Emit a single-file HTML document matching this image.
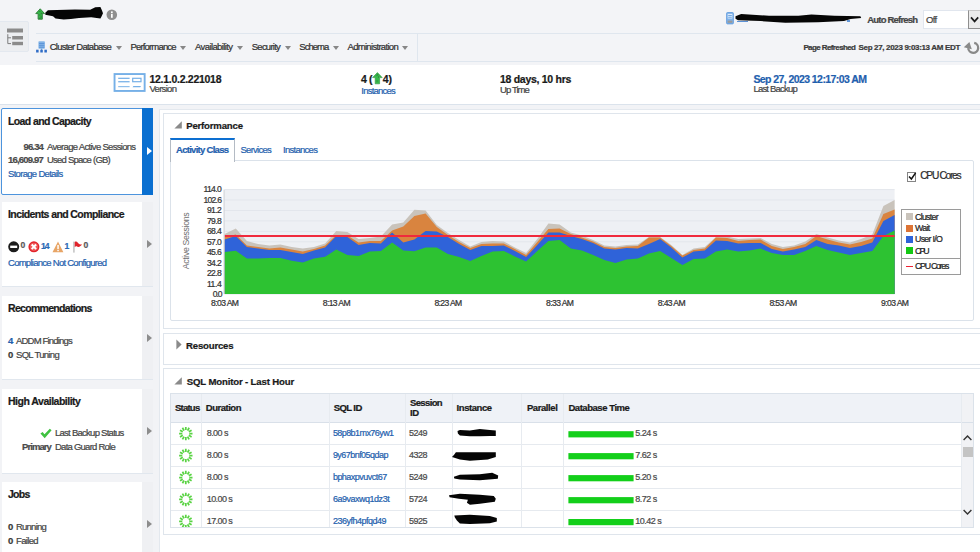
<!DOCTYPE html>
<html>
<head>
<meta charset="utf-8">
<title>Cluster Database</title>
<style>
html,body{margin:0;padding:0;}
body{width:980px;height:552px;overflow:hidden;position:relative;background:#f2f3f6;font-family:"Liberation Sans",sans-serif;}
.a{position:absolute;}
.t{position:absolute;white-space:nowrap;line-height:12px;font-family:"Liberation Sans",sans-serif;-webkit-text-stroke:0.22px;}
.card{position:absolute;left:2px;width:140px;background:#fff;border-bottom:1px solid #e1e7ee;box-sizing:border-box;}
.strip{position:absolute;left:142px;width:11px;background:#eff0f3;border-bottom:1px solid #e1e7ee;box-sizing:border-box;}
.arr{position:absolute;width:0;height:0;border-left:5.2px solid #8d8d8d;border-top:4.5px solid transparent;border-bottom:4.5px solid transparent;}
.dd{position:absolute;width:0;height:0;border-top:4.6px solid #878787;border-left:3px solid transparent;border-right:3px solid transparent;}
.panel{position:absolute;background:#fff;border:1px solid #dfe5ec;box-sizing:border-box;}
.hl{position:absolute;height:1px;background:#dfe6ee;}
.vl{position:absolute;width:1px;background:#dfe6ee;}
</style>
</head>
<body>
<!-- ===== header ===== -->
<div class="a" style="left:0;top:0;width:980px;height:65px;background:#f3f4f7;"></div>
<div class="hl" style="left:36px;top:33px;width:944px;"></div>
<div class="hl" style="left:36px;top:61px;width:944px;"></div>
<div class="vl" style="left:417px;top:34px;height:27px;"></div>
<!-- hamburger/tree button -->
<div class="a" style="left:-1px;top:21.4px;width:29.6px;height:30.4px;background:#eceef1;border:1px solid #e3e8ef;box-sizing:border-box;border-radius:0 2px 2px 0;"></div>
<svg class="a" style="left:0;top:22px;" width="29" height="30" viewBox="0 0 29 30">
  <rect x="7" y="6.5" width="16" height="4" fill="#8b8b8b"/>
  <rect x="12.2" y="14" width="10.8" height="3.5" fill="#8b8b8b"/>
  <rect x="12.2" y="19.8" width="10.8" height="3.4" fill="#8b8b8b"/>
  <path d="M7.8 12.2 V21.6 H11 M7.8 15.8 H11" stroke="#7d7d7d" stroke-width="1" fill="none"/>
</svg>
<!-- green up arrow -->
<svg class="a" style="left:35px;top:8px;" width="11" height="12" viewBox="0 0 11 12">
  <path d="M5.2 0.8 L9.6 5.6 H7.3 V11.2 H3.1 V5.6 H0.8 Z" fill="#34b848" stroke="#2f7a38" stroke-width="0.9"/>
  <path d="M4.4 3.2 h0.9 v0.9 h-0.9z M5.8 4.8 h0.9 v0.9 h-0.9z M4.4 6.6 h0.9 v0.9 h-0.9z M5.6 8.6 h0.9 v0.9 h-0.9z M4.4 9.8 h0.9 v0.9 h-0.9z" fill="#2b5a33"/>
</svg>
<!-- redacted target name -->
<svg class="a" style="left:0;top:0;" width="120" height="24" viewBox="0 0 120 24">
  <path d="M45.3 12.8 L47.9 10.2 L74.9 9.4 L90.2 9.7 L95.3 7.3 L100.4 6.9 L101.9 10.2 L103 13.3 L101.4 16.8 L100.4 18.4 L91.2 17.3 L79 17.9 L70.8 18.9 L63.7 19.4 L55.5 18.4 L53 16.3 L45.3 14.8 Z" fill="#050505"/>
</svg>
<!-- info icon -->
<svg class="a" style="left:106px;top:9px;" width="12" height="12" viewBox="0 0 12 12">
  <circle cx="5.8" cy="5.7" r="5.3" fill="#8f8f8f"/>
  <rect x="5" y="4.8" width="1.7" height="4" fill="#fff"/>
  <rect x="5" y="2.4" width="1.7" height="1.6" fill="#fff"/>
</svg>
<!-- cluster database icon -->
<svg class="a" style="left:36px;top:40.6px;" width="12" height="12" viewBox="0 0 12 12">
  <rect x="2.4" y="0.3" width="6.5" height="7.5" rx="0.8" fill="#86b6e8"/>
  <rect x="3" y="1.9" width="5.3" height="1" fill="#5b93d6"/>
  <rect x="3" y="3.8" width="5.3" height="1" fill="#5b93d6"/>
  <rect x="3" y="5.7" width="5.3" height="1" fill="#5b93d6"/>
  <rect x="5.2" y="7.6" width="0.9" height="1.6" fill="#5b93d6"/>
  <rect x="0.1" y="8.7" width="2.5" height="2.8" fill="#2f6cc6"/>
  <rect x="4.3" y="8.7" width="2.5" height="2.8" fill="#2f6cc6"/>
  <rect x="8.4" y="8.7" width="2.5" height="2.8" fill="#2f6cc6"/>
</svg>
<!-- dropdown arrows -->
<div class="dd" style="left:115.9px;top:45.8px;"></div>
<div class="dd" style="left:180.1px;top:45.8px;"></div>
<div class="dd" style="left:236.6px;top:45.8px;"></div>
<div class="dd" style="left:284.6px;top:45.8px;"></div>
<div class="dd" style="left:332.6px;top:45.8px;"></div>
<div class="dd" style="left:402.1px;top:45.8px;"></div>
<!-- phone/host icon -->
<svg class="a" style="left:726px;top:12.4px;" width="9" height="13" viewBox="0 0 9 13">
  <rect x="0.6" y="0.5" width="6.8" height="11.4" rx="0.9" fill="#7fb3ea" stroke="#5a97dc" stroke-width="0.8"/>
  <rect x="1.7" y="1.9" width="4.6" height="4.6" fill="#dcebfb"/>
  <rect x="2.2" y="3" width="3.6" height="0.8" fill="#5a97dc"/>
  <rect x="2.2" y="4.8" width="3.6" height="0.8" fill="#5a97dc"/>
  <rect x="1.6" y="8.6" width="4.8" height="2.2" fill="#9a9a9a"/>
</svg>
<!-- link text peeking from under redaction -->
<div class="a" style="left:737px;top:20.6px;width:11px;height:1.8px;background:#3f7fd0;opacity:.85;"></div>
<div class="a" style="left:847px;top:20px;width:3.4px;height:1.6px;background:#3f7fd0;opacity:.8;"></div>
<!-- redacted host -->
<svg class="a" style="left:700px;top:0;" width="180" height="30" viewBox="700 0 180 30">
  <path d="M735.5 16.2 L741.2 14.1 L769 15.8 L798.4 15.8 L811.4 14.6 L834.3 15.8 L860.4 16.2 L861.2 17.9 L850.6 19 L844 21.1 L818 22.3 L785.3 22.8 L760.8 21.1 L738 20.3 L735.5 18.7 Z" fill="#050505"/>
</svg>
<!-- select box -->
<div class="a" style="left:923px;top:10px;width:60px;height:19px;background:#fff;border:1px solid #e1e6ee;box-sizing:border-box;"></div>
<div class="a" style="left:968px;top:10px;width:14px;height:19px;background:#ebebeb;border-left:1px solid #8f8f8f;border-bottom:1px solid #8f8f8f;border-top:1px solid #c8c8c8;box-sizing:border-box;"></div>
<svg class="a" style="left:970px;top:16px;" width="10" height="8" viewBox="0 0 10 8"><path d="M1 1.4 L4.6 5.4 L8.2 1.4" stroke="#1c1c1c" stroke-width="1.7" fill="none"/></svg>
<!-- refresh icon -->
<svg class="a" style="left:960px;top:38px;" width="20" height="20" viewBox="0 0 20 20">
  <path d="M14.2 4.9 A5 5 0 1 1 8.2 10.2" stroke="#898989" stroke-width="2.3" fill="none"/>
  <path d="M3.8 9.2 L9.4 4.0 L11.8 11.2 Z" fill="#898989"/>
</svg>

<!-- ===== summary bar ===== -->
<div class="a" style="left:0;top:65px;width:980px;height:39px;background:#fff;"></div>
<div class="hl" style="left:0;top:104px;width:980px;background:#dbe3ec;"></div>
<!-- version card icon -->
<svg class="a" style="left:113px;top:73px;" width="34" height="20" viewBox="0 0 34 20">
  <rect x="1.55" y="1.05" width="30.1" height="16.9" fill="#fff" stroke="#76b0e7" stroke-width="1.9"/>
  <rect x="5.2" y="4.7" width="11.4" height="1.25" fill="#76b0e7"/>
  <rect x="5.2" y="8.1" width="11.4" height="1.25" fill="#76b0e7"/>
  <rect x="5.2" y="13" width="11.4" height="1.2" fill="#8fbfec"/>
  <path d="M19.6 14.2 L20.4 12.9 H28 L27.2 14.2 Z" fill="#76b0e7"/>
  <rect x="19.7" y="5.3" width="8.3" height="3.4" fill="#fff" stroke="#76b0e7" stroke-width="1.2"/>
</svg>
<!-- instances green arrow -->
<svg class="a" style="left:372px;top:72.4px;" width="11" height="13" viewBox="0 0 11 13">
  <path d="M5.4 0.6 L10.2 5.6 H7.6 V11.8 H3.2 V5.6 H0.6 Z" fill="#36ba4a" stroke="#3f9a4c" stroke-width="0.7"/>
  <path d="M4.6 3.2 h0.9 v0.9 h-0.9z M6 4.6 h0.9 v0.9 h-0.9z M4.6 8.6 h0.9 v0.9 h-0.9z M5.4 1.9 h0.8 v0.8 h-0.8z" fill="#35603c"/>
</svg>

<!-- ===== left column ===== -->
<!-- card 1 (selected) -->
<div class="a" style="left:1px;top:108px;width:152px;height:87px;background:#fff;border:1px solid #4d94dd;box-sizing:border-box;border-radius:2px;"></div>
<div class="a" style="left:142px;top:108px;width:11px;height:87px;background:#0a6fd0;"></div>
<div class="a" style="left:147px;top:147px;width:0;height:0;border-left:5px solid #fff;border-top:4px solid transparent;border-bottom:4px solid transparent;"></div>
<!-- card 2 -->
<div class="card" style="top:202px;height:85px;"></div><div class="strip" style="top:202px;height:85px;"></div>
<div class="arr" style="left:147px;top:239.9px;"></div>
<!-- card 3 -->
<div class="card" style="top:296px;height:84px;"></div><div class="strip" style="top:296px;height:84px;"></div>
<div class="arr" style="left:147px;top:333.5px;"></div>
<!-- card 4 -->
<div class="card" style="top:389px;height:85px;"></div><div class="strip" style="top:389px;height:85px;"></div>
<div class="arr" style="left:147px;top:426.9px;"></div>
<!-- card 5 -->
<div class="card" style="top:482px;height:75px;"></div><div class="strip" style="top:482px;height:75px;"></div>
<div class="arr" style="left:147px;top:520.1px;"></div>

<!-- incident icons -->
<svg class="a" style="left:8px;top:240.5px;" width="12" height="12" viewBox="0 0 12 12">
  <circle cx="5.7" cy="5.8" r="5.5" fill="#1c1c1c"/><rect x="2.2" y="4.6" width="7" height="2.4" fill="#fff"/>
</svg>
<svg class="a" style="left:27.5px;top:240.5px;" width="12" height="12" viewBox="0 0 12 12">
  <circle cx="5.9" cy="5.8" r="5.5" fill="#e2242c"/><circle cx="5.9" cy="5.8" r="4.1" fill="#ee5a5a"/>
  <path d="M3.7 3.5 L8.1 8.1 M8.1 3.5 L3.7 8.1" stroke="#fff" stroke-width="2"/>
</svg>
<svg class="a" style="left:51.5px;top:240.5px;" width="13" height="12" viewBox="0 0 13 12">
  <path d="M6 0.6 L11.4 11.3 H0.5 Z" fill="#e8a566"/>
  <rect x="5.3" y="4" width="1.5" height="4" fill="#fff"/><rect x="5.3" y="8.8" width="1.5" height="1.4" fill="#fff"/>
</svg>
<svg class="a" style="left:72.5px;top:240.5px;" width="11" height="12" viewBox="0 0 11 12">
  <rect x="0.5" y="0.6" width="0.9" height="11" fill="#9a9a9a"/>
  <path d="M1.7 0.9 C2.8 0.3 4.2 0.5 4.8 1.7 C5.5 3 7.4 3.5 9.2 3.6 C8 5 6 6.6 4.5 5.7 C3.5 5.1 2.6 5.3 1.7 5.9 Z" fill="#e0242c"/>
</svg>
<!-- check mark -->
<svg class="a" style="left:40.2px;top:427.6px;" width="12" height="11" viewBox="0 0 12 11">
  <path d="M0.4 5.6 L2.6 3.9 L4.5 6.3 L9.8 0.8 L11.6 2.2 L4.7 10.2 Z" fill="#3fc240"/>
</svg>

<!-- ===== main area ===== -->
<div class="a" style="left:159px;top:109px;width:830px;height:450px;background:#fff;border:1px solid #e3e8ee;box-sizing:border-box;"></div>
<!-- performance panel -->
<div class="panel" style="left:163px;top:113px;width:830px;height:216px;"></div>
<svg class="a" style="left:173.6px;top:120.8px;" width="9" height="9" viewBox="0 0 9 9"><path d="M7.8 0.2 V7.4 H0.4 Z" fill="#8a8a8a"/></svg>
<!-- chart box -->
<div class="a" style="left:170px;top:160px;width:804px;height:161px;background:#fff;border:1px solid #dbe2ea;box-sizing:border-box;border-radius:0 2px 2px 2px;"></div>
<!-- active tab -->
<div class="a" style="left:170px;top:138px;width:65px;height:24px;background:#fff;border-left:1px solid #b4bbc4;border-right:1px solid #b4bbc4;border-top:2px solid #0d6fd1;box-sizing:border-box;"></div>
<!-- checkbox -->
<div class="a" style="left:907px;top:172px;width:9.2px;height:9.5px;background:#fff;border:1px solid #858585;box-sizing:border-box;"></div>
<svg class="a" style="left:907px;top:171px;" width="11" height="11" viewBox="0 0 11 11"><path d="M2 5.4 L4.4 8 L8.6 1.8" stroke="#111" stroke-width="1.5" fill="none"/></svg>

<svg class="a" style="left:0;top:0;" width="980" height="552" viewBox="0 0 980 552">
<rect x="224.6" y="189.6" width="670.0" height="104.4" fill="#eef0f4"/>
<line x1="224.6" x2="894.6" y1="189.6" y2="189.6" stroke="#e3e6ec" stroke-width="1"/>
<line x1="224.6" x2="894.6" y1="200.0" y2="200.0" stroke="#e3e6ec" stroke-width="1"/>
<line x1="224.6" x2="894.6" y1="210.5" y2="210.5" stroke="#e3e6ec" stroke-width="1"/>
<line x1="224.6" x2="894.6" y1="220.9" y2="220.9" stroke="#e3e6ec" stroke-width="1"/>
<line x1="224.6" x2="894.6" y1="231.4" y2="231.4" stroke="#e3e6ec" stroke-width="1"/>
<line x1="224.6" x2="894.6" y1="241.8" y2="241.8" stroke="#e3e6ec" stroke-width="1"/>
<line x1="224.6" x2="894.6" y1="252.2" y2="252.2" stroke="#e3e6ec" stroke-width="1"/>
<line x1="224.6" x2="894.6" y1="262.7" y2="262.7" stroke="#e3e6ec" stroke-width="1"/>
<line x1="224.6" x2="894.6" y1="273.1" y2="273.1" stroke="#e3e6ec" stroke-width="1"/>
<line x1="224.6" x2="894.6" y1="283.6" y2="283.6" stroke="#e3e6ec" stroke-width="1"/>
<line x1="224.6" x2="894.6" y1="294.0" y2="294.0" stroke="#e3e6ec" stroke-width="1"/>
<polygon points="224.6,294.0 224.6,234.0 235.8,228.4 246.9,241.0 258.1,244.0 269.3,245.4 280.4,244.4 291.6,247.0 302.8,248.4 313.9,247.0 325.1,243.6 336.3,231.0 347.4,232.0 358.6,239.0 369.8,238.0 380.9,236.4 392.1,224.4 403.3,222.6 414.4,209.8 425.6,210.4 436.8,225.0 447.9,233.0 459.1,240.0 470.3,246.4 481.4,242.0 492.6,241.0 503.8,241.4 514.9,247.6 526.1,253.0 537.3,239.0 548.4,223.6 559.6,224.4 570.8,232.4 581.9,235.6 593.1,240.0 604.3,245.6 615.4,246.6 626.6,245.0 637.8,244.4 648.9,237.0 660.1,237.0 671.3,245.0 682.4,255.0 693.6,248.6 704.8,247.0 715.9,237.0 727.1,236.6 738.3,239.0 749.4,238.4 760.6,238.0 771.8,244.0 782.9,247.0 794.1,245.6 805.3,241.6 816.4,234.0 827.6,237.6 838.8,240.4 849.9,242.6 861.1,239.0 872.3,234.6 883.4,206.0 894.6,200.0 894.6,294.0" fill="#c9c3bb"/>
<polygon points="224.6,294.0 224.6,237.0 235.8,234.6 246.9,245.4 258.1,247.0 269.3,248.4 280.4,247.6 291.6,249.6 302.8,251.4 313.9,249.0 325.1,245.6 336.3,235.0 347.4,235.6 358.6,242.6 369.8,241.0 380.9,241.0 392.1,230.4 403.3,226.4 414.4,216.0 425.6,213.6 436.8,227.0 447.9,235.0 459.1,242.0 470.3,248.0 481.4,244.0 492.6,243.6 503.8,243.4 514.9,249.0 526.1,255.0 537.3,242.0 548.4,229.0 559.6,228.4 570.8,234.0 581.9,237.6 593.1,241.6 604.3,247.0 615.4,248.0 626.6,246.4 637.8,246.0 648.9,237.6 660.1,237.6 671.3,246.0 682.4,255.6 693.6,250.0 704.8,248.4 715.9,237.6 727.1,238.0 738.3,241.0 749.4,240.0 760.6,239.6 771.8,246.0 782.9,249.0 794.1,247.0 805.3,244.0 816.4,236.0 827.6,239.6 838.8,242.4 849.9,244.6 861.1,242.0 872.3,238.4 883.4,214.0 894.6,209.6 894.6,294.0" fill="#d9843f"/>
<polygon points="224.6,294.0 224.6,239.6 235.8,236.0 246.9,247.0 258.1,248.4 269.3,250.0 280.4,250.0 291.6,252.0 302.8,254.0 313.9,250.4 325.1,247.6 336.3,236.0 347.4,237.0 358.6,245.0 369.8,243.0 380.9,243.6 392.1,232.4 403.3,242.6 414.4,239.6 425.6,231.0 436.8,231.6 447.9,237.0 459.1,244.0 470.3,250.0 481.4,246.0 492.6,246.0 503.8,245.4 514.9,251.0 526.1,257.0 537.3,245.0 548.4,232.4 559.6,232.4 570.8,236.0 581.9,239.0 593.1,243.0 604.3,248.6 615.4,249.6 626.6,248.0 637.8,248.6 648.9,244.0 660.1,239.0 671.3,247.6 682.4,257.6 693.6,251.6 704.8,250.4 715.9,240.4 727.1,241.0 738.3,243.6 749.4,243.0 760.6,243.0 771.8,249.0 782.9,251.6 794.1,249.6 805.3,247.0 816.4,240.0 827.6,244.0 838.8,245.4 849.9,248.0 861.1,246.0 872.3,242.6 883.4,221.0 894.6,215.0 894.6,294.0" fill="#2f63d9"/>
<polygon points="224.6,294.0 224.6,252.0 235.8,250.8 246.9,258.4 258.1,258.4 269.3,258.0 280.4,258.0 291.6,260.8 302.8,262.6 313.9,258.4 325.1,256.8 336.3,249.6 347.4,255.0 358.6,256.0 369.8,251.6 380.9,251.0 392.1,242.6 403.3,250.6 414.4,251.2 425.6,247.6 436.8,247.6 447.9,254.0 459.1,257.0 470.3,261.0 481.4,256.0 492.6,251.6 503.8,251.0 514.9,256.4 526.1,261.6 537.3,251.0 548.4,241.0 559.6,240.0 570.8,248.4 581.9,250.6 593.1,255.0 604.3,260.0 615.4,263.0 626.6,259.6 637.8,258.4 648.9,253.6 660.1,251.0 671.3,258.0 682.4,265.0 693.6,259.0 704.8,258.4 715.9,251.6 727.1,249.6 738.3,251.6 749.4,250.6 760.6,248.6 771.8,253.0 782.9,255.0 794.1,255.0 805.3,251.0 816.4,246.0 827.6,250.0 838.8,252.4 849.9,255.0 861.1,253.0 872.3,251.0 883.4,236.0 894.6,230.4 894.6,294.0" fill="#2dc232"/>
<line x1="224.6" x2="894.6" y1="236" y2="236" stroke="#f02a3c" stroke-width="1.8"/>
<line x1="224.1" x2="224.1" y1="189.6" y2="294.0" stroke="#c9ccd2" stroke-width="1"/>
</svg>
<div class="a" style="left:186.4px;top:241px;width:0;height:0;"><div style="position:absolute;white-space:nowrap;font-size:8.8px;line-height:12px;color:#6e6e6e;transform:translate(-50%,-50%) rotate(-90deg);letter-spacing:-0.38px;">Active Sessions</div></div>

<!-- legend -->
<div class="a" style="left:901px;top:209px;width:59.5px;height:66px;background:#fff;border:1px solid #9a9a9a;box-sizing:border-box;"></div>
<div class="a" style="left:901px;top:258px;width:59.5px;height:1px;background:#9a9a9a;"></div>
<div class="a" style="left:906.1px;top:213.2px;width:6.8px;height:7.2px;background:#c9c3bb;"></div>
<div class="a" style="left:906.1px;top:224.6px;width:6.8px;height:7.2px;background:#dd7436;"></div>
<div class="a" style="left:906.1px;top:236px;width:6.8px;height:7.2px;background:#2f63d9;"></div>
<div class="a" style="left:906.1px;top:247.2px;width:6.8px;height:7.2px;background:#14c814;"></div>
<div class="a" style="left:905.6px;top:265.7px;width:7.6px;height:1.7px;background:#ee2233;"></div>

<!-- resources panel -->
<div class="panel" style="left:163px;top:333px;width:830px;height:32px;"></div>
<svg class="a" style="left:176px;top:339.4px;" width="7" height="12" viewBox="0 0 7 12"><path d="M0.4 0.4 L5.6 5.4 L0.4 10.6 Z" fill="#8a8a8a"/></svg>

<!-- sql monitor panel -->
<div class="panel" style="left:163px;top:368px;width:830px;height:167px;"></div>
<svg class="a" style="left:173.6px;top:376.6px;" width="9" height="9" viewBox="0 0 9 9"><path d="M7.8 0.2 V7.4 H0.4 Z" fill="#8a8a8a"/></svg>
<!-- table -->
<div class="a" style="left:170px;top:393px;width:804px;height:135px;background:#fff;border:1px solid #dbe2ea;box-sizing:border-box;"></div>
<div class="a" style="left:171px;top:394px;width:802px;height:28px;background:#eff2f7;"></div>
<div class="a" style="left:962px;top:394px;width:11px;height:133px;background:#f1f2f5;"></div>
<div class="hl" style="left:171px;top:422px;width:802px;background:#d9e0e9;"></div>
<div class="hl" style="left:171px;top:444px;width:791px;background:#e6eaef;"></div>
<div class="hl" style="left:171px;top:466px;width:791px;background:#e6eaef;"></div>
<div class="hl" style="left:171px;top:488px;width:791px;background:#e6eaef;"></div>
<div class="hl" style="left:171px;top:510px;width:791px;background:#e6eaef;"></div>
<div class="vl" style="left:201px;top:394px;height:133px;background:#e7ebf0;"></div>
<div class="vl" style="left:329px;top:394px;height:133px;background:#e7ebf0;"></div>
<div class="vl" style="left:405px;top:394px;height:133px;background:#e7ebf0;"></div>
<div class="vl" style="left:452px;top:394px;height:133px;background:#e7ebf0;"></div>
<div class="vl" style="left:521px;top:394px;height:133px;background:#e7ebf0;"></div>
<div class="vl" style="left:563px;top:394px;height:133px;background:#e7ebf0;"></div>
<div class="vl" style="left:961px;top:394px;height:133px;background:#e7ebf0;"></div>
<!-- scrollbar -->
<svg class="a" style="left:962px;top:434px;" width="11" height="8" viewBox="0 0 11 8"><path d="M1.6 6 L5.5 2 L9.4 6" stroke="#333" stroke-width="1.4" fill="none"/></svg>
<div class="a" style="left:962.5px;top:447px;width:10px;height:10px;background:#c4c4c4;"></div>
<svg class="a" style="left:962px;top:508px;" width="11" height="8" viewBox="0 0 11 8"><path d="M1.6 2 L5.5 6 L9.4 2" stroke="#333" stroke-width="1.4" fill="none"/></svg>

<svg class="a" style="left:0;top:0;" width="980" height="527" viewBox="0 0 980 527">
<path d="M189.30 433.60 L192.50 433.60 M188.83 435.35 L191.60 436.95 M187.55 436.63 L189.15 439.40 M185.80 437.10 L185.80 440.30 M184.05 436.63 L182.45 439.40 M182.77 435.35 L180.00 436.95 M182.30 433.60 L179.10 433.60 M182.77 431.85 L180.00 430.25 M184.05 430.57 L182.45 427.80 M185.80 430.10 L185.80 426.90 M187.55 430.57 L189.15 427.80 M188.83 431.85 L191.60 430.25" stroke="#5ad344" stroke-width="1.75" fill="none"/>
<rect x="568.4" y="431.2" width="65.2" height="6.2" fill="#13cf1a"/>
<polygon points="457.5,431.0 459.9,430.0 469.9,430.4 479.8,429.0 489.8,430.0 495.8,430.4 495.8,435.9 489.8,435.9 479.8,436.3 469.9,436.3 459.9,435.5 457.9,433.6" fill="#050505"/>
<path d="M189.30 455.55 L192.50 455.55 M188.83 457.30 L191.60 458.90 M187.55 458.58 L189.15 461.35 M185.80 459.05 L185.80 462.25 M184.05 458.58 L182.45 461.35 M182.77 457.30 L180.00 458.90 M182.30 455.55 L179.10 455.55 M182.77 453.80 L180.00 452.20 M184.05 452.52 L182.45 449.75 M185.80 452.05 L185.80 448.85 M187.55 452.52 L189.15 449.75 M188.83 453.80 L191.60 452.20" stroke="#5ad344" stroke-width="1.75" fill="none"/>
<rect x="568.4" y="453.1" width="65.2" height="6.2" fill="#13cf1a"/>
<polygon points="455.9,452.3 495.8,452.3 495.8,456.9 487.8,459.5 469.9,460.8 459.9,459.5 452.0,456.9 453.9,454.9" fill="#050505"/>
<path d="M189.30 477.50 L192.50 477.50 M188.83 479.25 L191.60 480.85 M187.55 480.53 L189.15 483.30 M185.80 481.00 L185.80 484.20 M184.05 480.53 L182.45 483.30 M182.77 479.25 L180.00 480.85 M182.30 477.50 L179.10 477.50 M182.77 475.75 L180.00 474.15 M184.05 474.47 L182.45 471.70 M185.80 474.00 L185.80 470.80 M187.55 474.47 L189.15 471.70 M188.83 475.75 L191.60 474.15" stroke="#5ad344" stroke-width="1.75" fill="none"/>
<rect x="568.4" y="475.1" width="65.2" height="6.2" fill="#13cf1a"/>
<polygon points="453.9,476.8 459.9,474.8 479.8,474.2 492.2,472.8 498.2,475.4 497.8,478.8 479.8,480.2 459.9,479.4 454.3,478.4" fill="#050505"/>
<path d="M189.30 499.45 L192.50 499.45 M188.83 501.20 L191.60 502.80 M187.55 502.48 L189.15 505.25 M185.80 502.95 L185.80 506.15 M184.05 502.48 L182.45 505.25 M182.77 501.20 L180.00 502.80 M182.30 499.45 L179.10 499.45 M182.77 497.70 L180.00 496.10 M184.05 496.42 L182.45 493.65 M185.80 495.95 L185.80 492.75 M187.55 496.42 L189.15 493.65 M188.83 497.70 L191.60 496.10" stroke="#5ad344" stroke-width="1.75" fill="none"/>
<rect x="568.4" y="497.1" width="65.2" height="6.2" fill="#13cf1a"/>
<polygon points="449.0,495.3 459.9,493.7 479.8,494.7 493.8,496.1 495.8,498.7 494.8,501.7 479.8,503.7 469.9,504.7 466.9,502.7 467.9,499.7 458.9,498.7 449.6,497.3" fill="#050505"/>
<path d="M189.30 521.40 L192.50 521.40 M188.83 523.15 L191.60 524.75 M187.55 524.43 L189.15 527.20 M185.80 524.90 L185.80 528.10 M184.05 524.43 L182.45 527.20 M182.77 523.15 L180.00 524.75 M182.30 521.40 L179.10 521.40 M182.77 519.65 L180.00 518.05 M184.05 518.37 L182.45 515.60 M185.80 517.90 L185.80 514.70 M187.55 518.37 L189.15 515.60 M188.83 519.65 L191.60 518.05" stroke="#5ad344" stroke-width="1.75" fill="none"/>
<rect x="568.4" y="519.0" width="65.2" height="6.2" fill="#13cf1a"/>
<polygon points="454.3,515.6 469.9,514.8 489.8,516.0 496.8,518.0 496.8,521.6 489.8,523.2 469.9,524.0 459.9,523.6 456.9,520.6 454.9,517.6" fill="#050505"/>
</svg>

<!-- ===== texts ===== -->
<span class="t" style="left:49.70px;top:41.00px;font-size:9.5px;color:#303030;letter-spacing:-0.757px;">Cluster Database</span>
<span class="t" style="left:130.50px;top:41.00px;font-size:9.5px;color:#303030;letter-spacing:-0.836px;">Performance</span>
<span class="t" style="left:195.00px;top:41.00px;font-size:9.5px;color:#303030;letter-spacing:-0.602px;">Availability</span>
<span class="t" style="left:251.80px;top:41.00px;font-size:9.5px;color:#303030;letter-spacing:-0.766px;">Security</span>
<span class="t" style="left:299.30px;top:41.00px;font-size:9.5px;color:#303030;letter-spacing:-0.977px;">Schema</span>
<span class="t" style="left:347.50px;top:41.00px;font-size:9.5px;color:#303030;letter-spacing:-0.693px;">Administration</span>
<span class="t" style="left:867.20px;top:13.50px;font-size:9.5px;color:#444;font-weight:bold;letter-spacing:-0.788px;">Auto Refresh</span>
<span class="t" style="left:925.90px;top:13.50px;font-size:9.5px;color:#444;letter-spacing:-0.600px;">Off</span>
<span class="t" style="left:803.40px;top:41.50px;font-size:8px;color:#3a3a3a;font-weight:bold;letter-spacing:-0.605px;">Page Refreshed</span>
<span class="t" style="left:858.50px;top:41.50px;font-size:8px;color:#3a3a3a;font-weight:bold;letter-spacing:-0.330px;">Sep 27, 2023 9:03:13 AM EDT</span>
<span class="t" style="left:149.50px;top:72.80px;font-size:10.5px;color:#1a1a1a;font-weight:bold;letter-spacing:-0.280px;">12.1.0.2.221018</span>
<span class="t" style="left:149.50px;top:83.10px;font-size:9.5px;color:#444;letter-spacing:-0.713px;">Version</span>
<span class="t" style="left:361.00px;top:73.00px;font-size:10.5px;color:#1a1a1a;font-weight:bold;letter-spacing:-0.322px;">4 (</span>
<span class="t" style="left:382.80px;top:73.00px;font-size:10.5px;color:#1a1a1a;font-weight:bold;letter-spacing:-0.072px;">4)</span>
<span class="t" style="left:361.30px;top:85.30px;font-size:9.5px;color:#1f5fae;letter-spacing:-0.775px;">Instances</span>
<span class="t" style="left:500.00px;top:73.00px;font-size:10.5px;color:#1a1a1a;font-weight:bold;letter-spacing:-0.287px;">18 days, 10 hrs</span>
<span class="t" style="left:500.00px;top:84.00px;font-size:9.5px;color:#444;letter-spacing:-0.911px;">Up Time</span>
<span class="t" style="left:753.40px;top:73.00px;font-size:10.5px;color:#1f5fae;font-weight:bold;letter-spacing:-0.577px;">Sep 27, 2023 12:17:03 AM</span>
<span class="t" style="left:753.40px;top:83.20px;font-size:9.5px;color:#444;letter-spacing:-0.791px;">Last Backup</span>
<span class="t" style="left:8.00px;top:115.00px;font-size:10.5px;color:#1a1a1a;font-weight:bold;letter-spacing:-0.609px;">Load and Capacity</span>
<span class="t" style="left:23.50px;top:141.00px;font-size:9.5px;color:#4a4a4a;font-weight:bold;letter-spacing:-0.856px;">96.34</span>
<span class="t" style="left:47.00px;top:141.00px;font-size:9.5px;color:#444;letter-spacing:-0.695px;">Average Active Sessions</span>
<span class="t" style="left:8.00px;top:154.40px;font-size:9.5px;color:#4a4a4a;font-weight:bold;letter-spacing:-0.807px;">16,609.97</span>
<span class="t" style="left:47.00px;top:154.40px;font-size:9.5px;color:#444;letter-spacing:-0.764px;">Used Space (GB)</span>
<span class="t" style="left:8.00px;top:168.40px;font-size:9.5px;color:#1f5fae;letter-spacing:-0.690px;">Storage Details</span>
<span class="t" style="left:8.00px;top:208.40px;font-size:10.5px;color:#1a1a1a;font-weight:bold;letter-spacing:-0.588px;">Incidents and Compliance</span>
<span class="t" style="left:20.60px;top:238.90px;font-size:8.6px;color:#5a5a5a;font-weight:bold;letter-spacing:-0.881px;">0</span>
<span class="t" style="left:41.00px;top:239.60px;font-size:8.6px;color:#2a6ab5;font-weight:bold;letter-spacing:-0.981px;">14</span>
<span class="t" style="left:64.60px;top:239.60px;font-size:8.6px;color:#2a6ab5;font-weight:bold;letter-spacing:-1.381px;">1</span>
<span class="t" style="left:83.40px;top:238.90px;font-size:8.6px;color:#5a5a5a;font-weight:bold;letter-spacing:-0.881px;">0</span>
<span class="t" style="left:8.00px;top:257.00px;font-size:9.5px;color:#1f5fae;letter-spacing:-0.732px;">Compliance Not Configured</span>
<span class="t" style="left:8.00px;top:301.60px;font-size:10.5px;color:#1a1a1a;font-weight:bold;letter-spacing:-0.689px;">Recommendations</span>
<span class="t" style="left:8.00px;top:335.40px;font-size:9.5px;color:#1f5fae;font-weight:bold;letter-spacing:-0.697px;">4</span>
<span class="t" style="left:16.00px;top:335.40px;font-size:9.5px;color:#444;letter-spacing:-0.810px;">ADDM Findings</span>
<span class="t" style="left:8.00px;top:349.00px;font-size:9.5px;color:#3a3a3a;font-weight:bold;letter-spacing:-0.697px;">0</span>
<span class="t" style="left:16.00px;top:349.00px;font-size:9.5px;color:#444;letter-spacing:-0.683px;">SQL Tuning</span>
<span class="t" style="left:8.00px;top:395.00px;font-size:10.5px;color:#1a1a1a;font-weight:bold;letter-spacing:-0.500px;">High Availability</span>
<span class="t" style="left:55.00px;top:426.60px;font-size:9.5px;color:#444;letter-spacing:-0.737px;">Last Backup Status</span>
<span class="t" style="left:22.00px;top:441.00px;font-size:9.5px;color:#4a4a4a;font-weight:bold;letter-spacing:-0.913px;">Primary</span>
<span class="t" style="left:55.00px;top:441.00px;font-size:9.5px;color:#444;letter-spacing:-0.753px;">Data Guard Role</span>
<span class="t" style="left:8.00px;top:487.90px;font-size:10.5px;color:#1a1a1a;font-weight:bold;letter-spacing:-0.729px;">Jobs</span>
<span class="t" style="left:8.00px;top:521.40px;font-size:9.5px;color:#3a3a3a;font-weight:bold;letter-spacing:-0.697px;">0</span>
<span class="t" style="left:16.00px;top:521.40px;font-size:9.5px;color:#444;letter-spacing:-0.770px;">Running</span>
<span class="t" style="left:8.00px;top:534.80px;font-size:9.5px;color:#3a3a3a;font-weight:bold;letter-spacing:-0.697px;">0</span>
<span class="t" style="left:16.00px;top:534.80px;font-size:9.5px;color:#444;letter-spacing:-0.646px;">Failed</span>
<span class="t" style="left:186.20px;top:120.40px;font-size:9.6px;color:#1a1a1a;font-weight:bold;letter-spacing:-0.187px;">Performance</span>
<span class="t" style="left:176.00px;top:144.40px;font-size:9.5px;color:#1f5fae;font-weight:bold;letter-spacing:-0.715px;">Activity Class</span>
<span class="t" style="left:240.50px;top:144.40px;font-size:9.5px;color:#1f5fae;letter-spacing:-0.730px;">Services</span>
<span class="t" style="left:283.00px;top:144.40px;font-size:9.5px;color:#1f5fae;letter-spacing:-0.719px;">Instances</span>
<span class="t" style="left:920.30px;top:170.30px;font-size:10.2px;color:#2a2a2a;letter-spacing:-1.280px;">CPU Cores</span>
<span class="t" style="left:203.40px;top:183.30px;font-size:8.6px;color:#333;letter-spacing:-0.595px;">114.0</span>
<span class="t" style="left:203.40px;top:193.77px;font-size:8.6px;color:#333;letter-spacing:-0.723px;">102.6</span>
<span class="t" style="left:206.90px;top:204.24px;font-size:8.6px;color:#333;letter-spacing:-0.584px;">91.2</span>
<span class="t" style="left:206.90px;top:214.71px;font-size:8.6px;color:#333;letter-spacing:-0.584px;">79.8</span>
<span class="t" style="left:206.90px;top:225.18px;font-size:8.6px;color:#333;letter-spacing:-0.584px;">68.4</span>
<span class="t" style="left:206.90px;top:235.65px;font-size:8.6px;color:#333;letter-spacing:-0.584px;">57.0</span>
<span class="t" style="left:206.90px;top:246.12px;font-size:8.6px;color:#333;letter-spacing:-0.584px;">45.6</span>
<span class="t" style="left:206.90px;top:256.59px;font-size:8.6px;color:#333;letter-spacing:-0.584px;">34.2</span>
<span class="t" style="left:206.90px;top:267.06px;font-size:8.6px;color:#333;letter-spacing:-0.584px;">22.8</span>
<span class="t" style="left:206.90px;top:277.53px;font-size:8.6px;color:#333;letter-spacing:-0.423px;">11.4</span>
<span class="t" style="left:212.80px;top:288.00px;font-size:8.6px;color:#333;letter-spacing:-1.151px;">0.0</span>
<span class="t" style="left:211.10px;top:297.20px;font-size:8.6px;color:#333;letter-spacing:-0.619px;">8:03 AM</span>
<span class="t" style="left:322.77px;top:297.20px;font-size:8.6px;color:#333;letter-spacing:-0.619px;">8:13 AM</span>
<span class="t" style="left:434.44px;top:297.20px;font-size:8.6px;color:#333;letter-spacing:-0.619px;">8:23 AM</span>
<span class="t" style="left:546.11px;top:297.20px;font-size:8.6px;color:#333;letter-spacing:-0.619px;">8:33 AM</span>
<span class="t" style="left:657.78px;top:297.20px;font-size:8.6px;color:#333;letter-spacing:-0.619px;">8:43 AM</span>
<span class="t" style="left:769.45px;top:297.20px;font-size:8.6px;color:#333;letter-spacing:-0.619px;">8:53 AM</span>
<span class="t" style="left:881.12px;top:297.20px;font-size:8.6px;color:#333;letter-spacing:-0.619px;">9:03 AM</span>
<span class="t" style="left:915.00px;top:210.50px;font-size:8.8px;color:#222;letter-spacing:-0.696px;">Cluster</span>
<span class="t" style="left:915.00px;top:221.90px;font-size:8.8px;color:#222;letter-spacing:-0.695px;">Wait</span>
<span class="t" style="left:915.00px;top:233.30px;font-size:8.8px;color:#222;letter-spacing:-0.694px;">User I/O</span>
<span class="t" style="left:915.00px;top:244.80px;font-size:8.8px;color:#222;letter-spacing:-1.926px;">CPU</span>
<span class="t" style="left:915.00px;top:260.20px;font-size:8.8px;color:#222;letter-spacing:-1.276px;">CPU Cores</span>
<span class="t" style="left:186.00px;top:339.60px;font-size:9.6px;color:#1a1a1a;font-weight:bold;letter-spacing:-0.185px;">Resources</span>
<span class="t" style="left:186.80px;top:375.80px;font-size:9.6px;color:#1a1a1a;font-weight:bold;letter-spacing:-0.152px;">SQL Monitor - Last Hour</span>
<span class="t" style="left:174.90px;top:401.60px;font-size:9.5px;color:#1a1a1a;font-weight:bold;letter-spacing:-0.741px;">Status</span>
<span class="t" style="left:205.80px;top:401.60px;font-size:9.5px;color:#1a1a1a;font-weight:bold;letter-spacing:-0.483px;">Duration</span>
<span class="t" style="left:333.70px;top:401.60px;font-size:9.5px;color:#1a1a1a;font-weight:bold;letter-spacing:-0.583px;">SQL ID</span>
<span class="t" style="left:410.00px;top:397.00px;font-size:9.5px;color:#1a1a1a;font-weight:bold;letter-spacing:-0.634px;">Session</span>
<span class="t" style="left:410.00px;top:407.00px;font-size:9.5px;color:#1a1a1a;font-weight:bold;letter-spacing:-0.500px;">ID</span>
<span class="t" style="left:456.60px;top:401.60px;font-size:9.5px;color:#1a1a1a;font-weight:bold;letter-spacing:-0.431px;">Instance</span>
<span class="t" style="left:526.90px;top:401.60px;font-size:9.5px;color:#1a1a1a;font-weight:bold;letter-spacing:-0.414px;">Parallel</span>
<span class="t" style="left:568.40px;top:401.60px;font-size:9.5px;color:#1a1a1a;font-weight:bold;letter-spacing:-0.453px;">Database Time</span>
<span class="t" style="left:206.70px;top:427.40px;font-size:9px;color:#4a4a4a;letter-spacing:-0.555px;">8.00 s</span>
<span class="t" style="left:332.90px;top:427.40px;font-size:9px;color:#1f5fae;letter-spacing:-0.573px;">58p8b1mx76yw1</span>
<span class="t" style="left:409.00px;top:427.40px;font-size:9px;color:#4a4a4a;letter-spacing:-0.508px;">5249</span>
<span class="t" style="left:635.30px;top:427.40px;font-size:9px;color:#4a4a4a;letter-spacing:-0.505px;">5.24 s</span>
<span class="t" style="left:206.70px;top:449.35px;font-size:9px;color:#4a4a4a;letter-spacing:-0.555px;">8.00 s</span>
<span class="t" style="left:332.90px;top:449.35px;font-size:9px;color:#1f5fae;letter-spacing:-0.543px;">9y67bnf05qdap</span>
<span class="t" style="left:409.00px;top:449.35px;font-size:9px;color:#4a4a4a;letter-spacing:-0.508px;">4328</span>
<span class="t" style="left:635.30px;top:449.35px;font-size:9px;color:#4a4a4a;letter-spacing:-0.505px;">7.62 s</span>
<span class="t" style="left:206.70px;top:471.30px;font-size:9px;color:#4a4a4a;letter-spacing:-0.555px;">8.00 s</span>
<span class="t" style="left:332.90px;top:471.30px;font-size:9px;color:#1f5fae;letter-spacing:-0.519px;">bphaxpvuvct67</span>
<span class="t" style="left:409.00px;top:471.30px;font-size:9px;color:#4a4a4a;letter-spacing:-0.508px;">5249</span>
<span class="t" style="left:635.30px;top:471.30px;font-size:9px;color:#4a4a4a;letter-spacing:-0.505px;">5.20 s</span>
<span class="t" style="left:206.70px;top:493.25px;font-size:9px;color:#4a4a4a;letter-spacing:-0.562px;">10.00 s</span>
<span class="t" style="left:332.90px;top:493.25px;font-size:9px;color:#1f5fae;letter-spacing:-0.481px;">6a9vaxwq1dz3t</span>
<span class="t" style="left:409.00px;top:493.25px;font-size:9px;color:#4a4a4a;letter-spacing:-0.508px;">5724</span>
<span class="t" style="left:635.30px;top:493.25px;font-size:9px;color:#4a4a4a;letter-spacing:-0.505px;">8.72 s</span>
<span class="t" style="left:206.70px;top:515.20px;font-size:9px;color:#4a4a4a;letter-spacing:-0.562px;">17.00 s</span>
<span class="t" style="left:332.90px;top:515.20px;font-size:9px;color:#1f5fae;letter-spacing:-0.505px;">236yfh4pfqd49</span>
<span class="t" style="left:409.00px;top:515.20px;font-size:9px;color:#4a4a4a;letter-spacing:-0.508px;">5925</span>
<span class="t" style="left:635.30px;top:515.20px;font-size:9px;color:#4a4a4a;letter-spacing:-0.504px;">10.42 s</span>
</body>
</html>
